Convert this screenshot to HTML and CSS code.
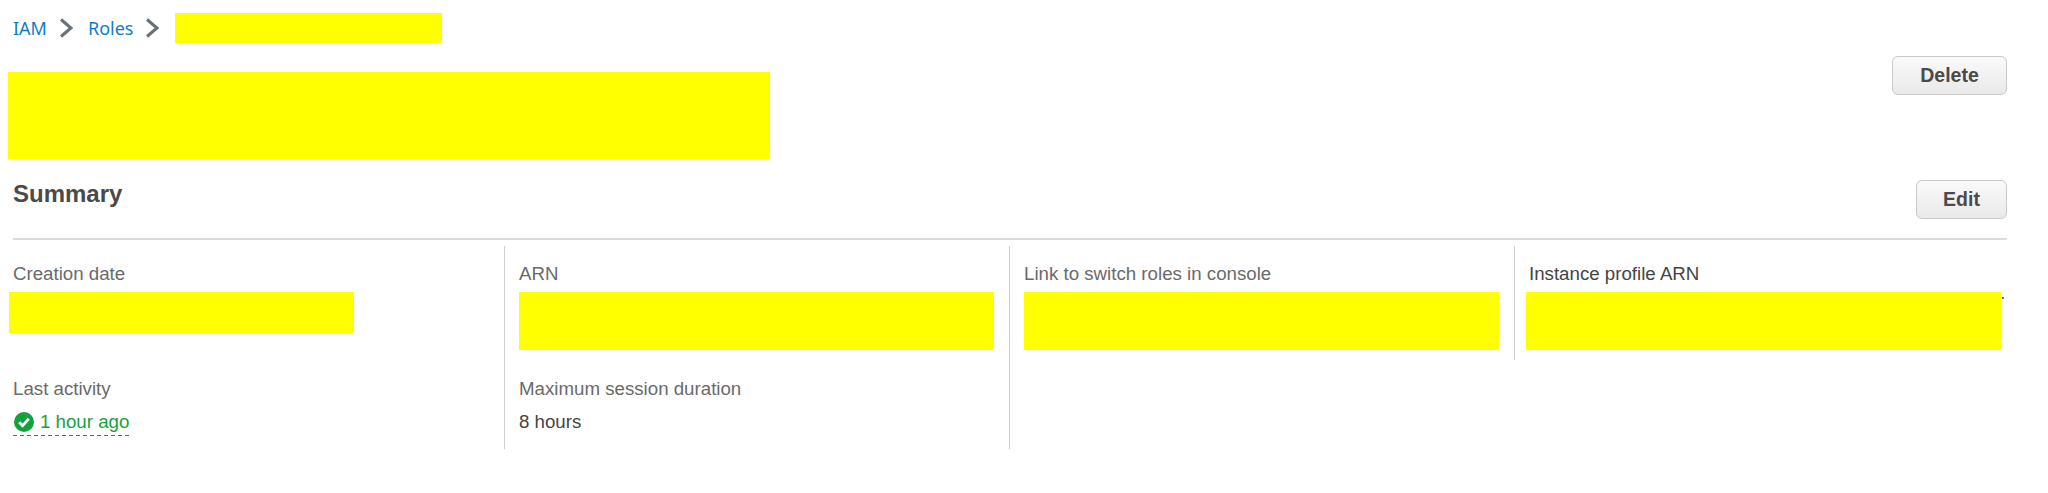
FILE: index.html
```html
<!DOCTYPE html>
<html lang="en">
  <head>
    <meta charset="UTF-8" />
    <title>IAM Role Summary</title>
    <link rel="stylesheet" href="styles.css">
  </head>
  <body>
    <div class="page">
      <nav class="breadcrumb">
        <a href="#">IAM</a>
        <svg class="chevron" viewBox="0 0 14 20"><path d="M2 1.5 L12 10 L2 18.5" /></svg>
        <a href="#">Roles</a>
        <svg class="chevron" viewBox="0 0 14 20"><path d="M2 1.5 L12 10 L2 18.5" /></svg>
        <div class="redact crumb-redact"></div>
      </nav>

      <div class="title-row">
        <div class="redact title-redact"></div>
        <button class="btn delete">Delete</button>
      </div>

      <div class="summary-head">
        <h2>Summary</h2>
        <button class="btn edit">Edit</button>
      </div>

      <div class="columns">
        <div class="column first">
          <div class="field top">
            <div class="label">Creation date</div>
            <div class="redact date-redact"></div>
          </div>
          <div class="field">
            <div class="label">Last activity</div>
            <div class="value activity">
              <svg class="check" viewBox="0 0 20 20">
                <circle cx="10" cy="10" r="10" />
                <path d="M5.2 10.2 L8.6 13.6 L14.8 6.8" />
              </svg>
              <span>1 hour ago</span>
            </div>
          </div>
        </div>

        <div class="column">
          <div class="field top">
            <div class="label">ARN</div>
            <div class="redact arn-redact"></div>
          </div>
          <div class="field">
            <div class="label">Maximum session duration</div>
            <div class="value">8 hours</div>
          </div>
        </div>

        <div class="column">
          <div class="field top">
            <div class="label">Link to switch roles in console</div>
            <div class="redact arn-redact"></div>
          </div>
        </div>

        <div class="column last">
          <div class="field">
            <div class="label dark">Instance profile ARN</div>
            <div class="redact arn-redact pulled"></div>
          </div>
        </div>
      </div>
    </div>
  </body>
</html>
```

FILE: styles.css
```css
body {
  margin: 0;
  background: #fff;
  font-family: "Liberation Sans", Arial, sans-serif;
  font-size: 18.7px;
  color: #444;
}

.page {
  padding: 13px 41px 0 13px;
}

.redact {
  background: #ffff00;
}

.breadcrumb {
  display: flex;
  align-items: center;
  height: 30px;
  font-family: "Noto Sans", sans-serif;
  font-size: 18px;
}

.breadcrumb a {
  color: #0f7dc2;
  text-decoration: none;
}

.chevron {
  width: 14px;
  height: 20px;
  margin: 0 15px 0 12px;
}

.chevron path {
  fill: none;
  stroke: #687078;
  stroke-width: 3;
}

.crumb-redact {
  width: 267px;
  height: 30px;
}

.breadcrumb .chevron:nth-of-type(2) {
  margin-right: 16px;
}

.title-row {
  display: flex;
  justify-content: space-between;
  align-items: flex-start;
  margin-top: 13px;
}

.title-redact {
  width: 762px;
  height: 87px;
  margin: 16px 0 0 -5px;
}

.btn {
  height: 39px;
  padding: 0;
  border: 1.5px solid #c9c9c9;
  border-radius: 6px;
  background: linear-gradient(#fafafa, #e9e9e9);
  font-family: "Liberation Sans", Arial, sans-serif;
  font-size: 19.5px;
  font-weight: bold;
  color: #4a4a4a;
}

.delete {
  width: 115px;
}

.edit {
  width: 91px;
}

.summary-head {
  display: flex;
  justify-content: space-between;
  align-items: flex-start;
  margin-top: 21px;
  padding-bottom: 19px;
  border-bottom: 2px solid #dcdcdc;
}

.summary-head h2 {
  margin: 0;
  font-size: 24px;
  line-height: 28px;
  font-weight: bold;
  color: #4a4a4a;
}

.columns {
  display: grid;
  grid-template-columns: 491px 505px 505px 1fr;
  margin-top: 6px;
}

.column {
  padding: 17px 0 12px 14px;
  border-left: 1.5px solid #cfcfcf;
}

.column.first {
  padding-left: 0;
  border-left: none;
}

.column.last {
  align-self: start;
  height: 97px;
  padding-bottom: 0;
}

.field.top {
  height: 115px;
}

.label {
  line-height: 22px;
  color: #6a6a6a;
}

.label.dark {
  color: #444;
}

.value {
  margin-top: 11px;
  line-height: 22px;
}

.date-redact {
  width: 345px;
  height: 41px;
  margin: 7px 0 0 -4px;
}

.arn-redact {
  width: 475px;
  height: 58px;
  margin-top: 7px;
}

.arn-redact.pulled {
  position: relative;
  margin-left: -3px;
}

/* stray full stop left showing past the end of the redaction */
.arn-redact.pulled::after {
  content: "";
  position: absolute;
  top: 5px;
  right: -3px;
  width: 2px;
  height: 2px;
  background: #777;
}

.activity {
  display: inline-flex;
  align-items: center;
  gap: 6px;
  padding-bottom: 3px;
  background: repeating-linear-gradient(90deg, #666 0 4px, transparent 4px 7px) left bottom / 100% 1.5px no-repeat;
  color: #12a33c;
}

.check {
  width: 20px;
  height: 20px;
  margin-left: 1px;
}

.check circle {
  fill: #12a33c;
}

.check path {
  fill: none;
  stroke: #fff;
  stroke-width: 2.8;
}
```
